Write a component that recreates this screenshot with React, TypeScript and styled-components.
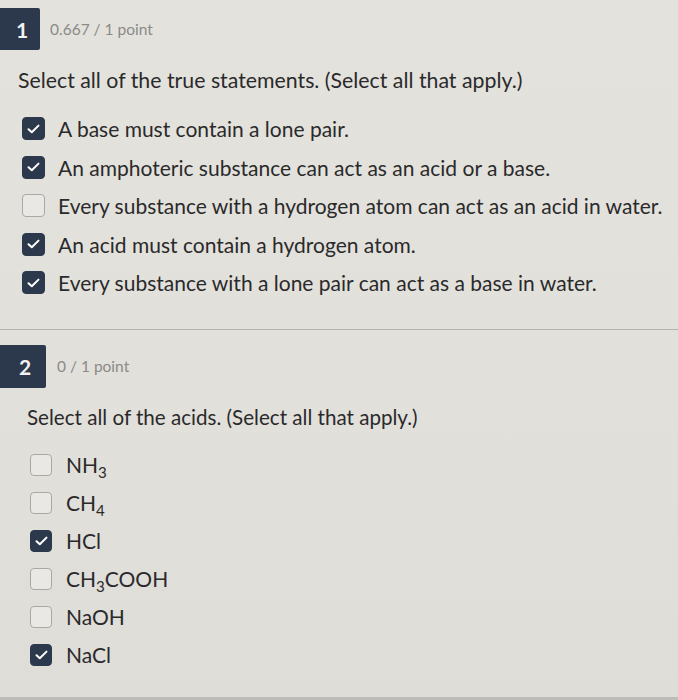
import { FC } from 'react'
import styled, { createGlobalStyle } from 'styled-components'

const GlobalStyle = createGlobalStyle`
  html, body {
    margin: 0;
    padding: 0;
    background: #e3e1dc;
  }
  body {
    font-family: Lato, 'Noto Sans', sans-serif;
    color: #2f2f30;
  }
`

type Option = { label: React.ReactNode; checked: boolean }

const questionOne: Option[] = [
  { label: 'A base must contain a lone pair.', checked: true },
  { label: 'An amphoteric substance can act as an acid or a base.', checked: true },
  { label: 'Every substance with a hydrogen atom can act as an acid in water.', checked: false },
  { label: 'An acid must contain a hydrogen atom.', checked: true },
  { label: 'Every substance with a lone pair can act as a base in water.', checked: true },
]

const questionTwo: Option[] = [
  { label: <>NH<sub>3</sub></>, checked: false },
  { label: <>CH<sub>4</sub></>, checked: false },
  { label: 'HCl', checked: true },
  { label: <>CH<sub>3</sub>COOH</>, checked: false },
  { label: 'NaOH', checked: false },
  { label: 'NaCl', checked: true },
]

const Check: FC = () => (
  <svg width="13" height="10" viewBox="0 0 13 10" fill="none">
    <path d="M1.5 5.2 L4.8 8.3 L11.5 1.6" stroke="#fff" strokeWidth="2" strokeLinecap="round" strokeLinejoin="round" />
  </svg>
)

const App: FC = () => {
  return (
    <>
      <GlobalStyle />
      <Page>
        <Question $top={8} $indent={18}>
          <Header>
            <Badge $w={40} $h={42}>1</Badge>
            <Points $gap={10}>0.667 / 1 point</Points>
          </Header>
          <Prompt $size={21.3} $top={17}>Select all of the true statements. (Select all that apply.)</Prompt>
          <OptionList $top={24} $gap={15.5}>
            {questionOne.map((o, i) => (
              <OptionRow key={i} $boxIndent={22} $textGap={13}>
                <Box $checked={o.checked} $size={23}>{o.checked && <Check />}</Box>
                <OptionText $size={21}>{o.label}</OptionText>
              </OptionRow>
            ))}
          </OptionList>
        </Question>
        <Divider />
        <Question $top={15} $indent={27}>
          <Header>
            <Badge $w={46} $h={43}>2</Badge>
            <Points $gap={11}>0 / 1 point</Points>
          </Header>
          <Prompt $size={20.6} $top={16}>Select all of the acids. (Select all that apply.)</Prompt>
          <OptionList $top={23.5} $gap={15}>
            {questionTwo.map((o, i) => (
              <OptionRow key={i} $boxIndent={30} $textGap={14}>
                <Box $checked={o.checked} $size={22}>{o.checked && <Check />}</Box>
                <OptionText $size={21}>{o.label}</OptionText>
              </OptionRow>
            ))}
          </OptionList>
        </Question>
        <BottomEdge />
      </Page>
    </>
  )
}

const Page = styled.div`
  width: 678px;
  height: 700px;
  display: flex;
  flex-direction: column;
  overflow: hidden;
  background: linear-gradient(180deg, #e4e2dd 0%, #e2e0db 60%, #dfddd8 100%);
`

const Question = styled.div<{ $top: number; $indent: number }>`
  display: flex;
  flex-direction: column;
  padding-top: ${(p) => p.$top}px;
  --indent: ${(p) => p.$indent}px;
`

const Header = styled.div`
  display: flex;
  flex-direction: row;
  align-items: center;
`

const Badge = styled.div<{ $w: number; $h: number }>`
  width: ${(p) => p.$w}px;
  height: ${(p) => p.$h}px;
  background: #2c384b;
  color: #f2f2f2;
  font-size: 21px;
  font-weight: 700;
  display: flex;
  align-items: center;
  justify-content: center;
  padding-left: 4px;
  box-sizing: border-box;
  border-radius: 0 2px 2px 0;
`

const Points = styled.div<{ $gap: number }>`
  margin-left: ${(p) => p.$gap}px;
  font-size: 15.5px;
  color: #8b8a87;
`

const Prompt = styled.div<{ $size: number; $top: number }>`
  margin-top: ${(p) => p.$top}px;
  padding-left: var(--indent);
  font-size: ${(p) => p.$size}px;
  line-height: 26px;
  color: #2a2a2b;
`

const OptionList = styled.div<{ $top: number; $gap: number }>`
  display: flex;
  flex-direction: column;
  margin-top: ${(p) => p.$top}px;
  gap: ${(p) => p.$gap}px;
`

const OptionRow = styled.div<{ $boxIndent: number; $textGap: number }>`
  display: flex;
  flex-direction: row;
  align-items: center;
  padding-left: ${(p) => p.$boxIndent}px;
  gap: ${(p) => p.$textGap}px;
  height: 23px;
`

const Box = styled.div<{ $checked: boolean; $size: number }>`
  width: ${(p) => p.$size}px;
  height: ${(p) => p.$size}px;
  box-sizing: border-box;
  border-radius: 4px;
  flex-shrink: 0;
  display: flex;
  align-items: center;
  justify-content: center;
  background: ${(p) => (p.$checked ? '#2c384b' : '#eae8e4')};
  border: 1.5px solid ${(p) => (p.$checked ? '#2c384b' : '#a9a8a5')};
`

const OptionText = styled.div<{ $size: number }>`
  font-size: ${(p) => p.$size}px;
  color: #2a2a2b;
  white-space: nowrap;
  sub {
    font-size: 0.72em;
    vertical-align: -0.3em;
    line-height: 0;
  }
`

const Divider = styled.div`
  margin-top: 34.5px;
  height: 1px;
  background: #b3b2ae;
  flex-shrink: 0;
`

const BottomEdge = styled.div`
  margin-top: auto;
  height: 3px;
  background: #bdbcb8;
  flex-shrink: 0;
`

export default App
